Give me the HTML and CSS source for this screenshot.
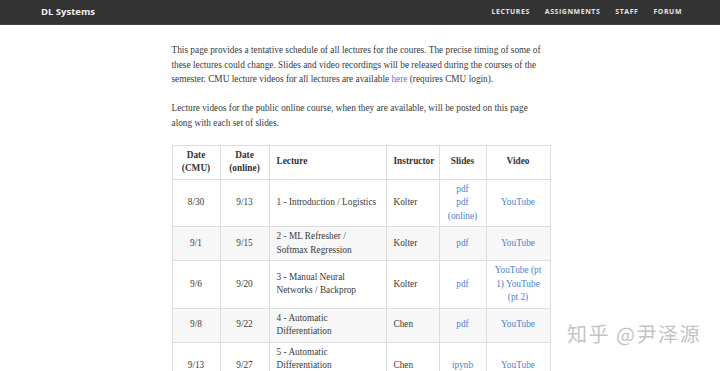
FILE: index.html
```html
<!DOCTYPE html>
<html lang="en">
<head>
  <meta charset="UTF-8" />
  <title>Lectures | DL Systems</title>
  <link rel="stylesheet" href="styles.css">
</head>
<body>

  <nav class="navbar">
    <a href="#" class="brand">DL Systems</a>
    <ul class="nav-links">
      <li><a href="#">Lectures</a></li>
      <li><a href="#">Assignments</a></li>
      <li><a href="#">Staff</a></li>
      <li><a href="#">Forum</a></li>
    </ul>
  </nav>

  <div class="container">
    <p>This page provides a tentative schedule of all lectures for the coures. The precise timing of some of these lectures could change. Slides and video recordings will be released during the courses of the semester. CMU lecture videos for all lectures are available <a href="#">here</a> (requires CMU login).</p>

    <p>Lecture videos for the public online course, when they are available, will be posted on this page along with each set of slides.</p>

    <table class="schedule">
      <thead>
        <tr>
          <th class="c-date">Date (CMU)</th>
          <th class="c-online">Date (online)</th>
          <th class="c-lecture left">Lecture</th>
          <th class="c-instr left">Instructor</th>
          <th class="c-slides">Slides</th>
          <th class="c-video">Video</th>
        </tr>
      </thead>
      <tbody>
        <tr>
          <td>8/30</td>
          <td>9/13</td>
          <td class="left">1 - Introduction / Logistics</td>
          <td class="left">Kolter</td>
          <td><a href="#">pdf</a><br><a href="#">pdf (online)</a></td>
          <td><a href="#">YouTube</a></td>
        </tr>
        <tr>
          <td>9/1</td>
          <td>9/15</td>
          <td class="left">2 - ML Refresher / Softmax Regression</td>
          <td class="left">Kolter</td>
          <td><a href="#">pdf</a></td>
          <td><a href="#">YouTube</a></td>
        </tr>
        <tr>
          <td>9/6</td>
          <td>9/20</td>
          <td class="left">3 - Manual Neural Networks / Backprop</td>
          <td class="left">Kolter</td>
          <td><a href="#">pdf</a></td>
          <td><a href="#">YouTube (pt 1)</a> <a href="#">YouTube (pt 2)</a></td>
        </tr>
        <tr>
          <td>9/8</td>
          <td>9/22</td>
          <td class="left">4 - Automatic Differentiation</td>
          <td class="left">Chen</td>
          <td><a href="#">pdf</a></td>
          <td><a href="#">YouTube</a></td>
        </tr>
        <tr>
          <td>9/13</td>
          <td>9/27</td>
          <td class="left">5 - Automatic Differentiation Implementation</td>
          <td class="left">Chen</td>
          <td><a href="#">ipynb</a></td>
          <td><a href="#">YouTube</a></td>
        </tr>
      </tbody>
    </table>
  </div>

  <div class="watermark">知乎 @尹泽源</div>

</body>
</html>
```

FILE: styles.css
```css
body {
  margin: 0;
  font-family: 'Liberation Serif', 'Times New Roman', serif;
  font-size: 9.3px;
  line-height: 14.5px;
  color: #3a3a3a;
  background: #fff;
}

a {
  color: #4a7fd4;
  text-decoration: none;
}

.navbar {
  display: flex;
  align-items: center;
  justify-content: space-between;
  height: 24px;
  padding: 0 38px 0 41px;
  background-color: #333;
  border-bottom: 1px solid #444;
  font-family: 'Open Sans', sans-serif;
}

.brand {
  color: #f2f2f2;
  font-weight: 700;
  font-size: 9.5px;
}

.nav-links {
  display: flex;
  gap: 15px;
  margin: 0;
  padding: 0;
  list-style: none;
}

.nav-links a {
  color: #e6e6e6;
  font-size: 6.9px;
  font-weight: 700;
  letter-spacing: 0.6px;
  text-transform: uppercase;
}

.container {
  width: 377px;
  margin: 0 auto;
  padding-top: 18px;
}

.container p {
  margin: 0 0 14.5px;
}

.schedule {
  width: 378px;
  margin-top: 14px;
  border-collapse: collapse;
  table-layout: fixed;
  line-height: 13.5px;
}

.schedule th,
.schedule td {
  box-sizing: border-box;
  border: 1px solid #ddd;
  padding: 3px 7px;
  text-align: center;
  vertical-align: middle;
}

.schedule th {
  font-weight: bold;
  color: #333;
}

.schedule .left {
  text-align: left;
}

.schedule tbody tr:nth-child(even) {
  background-color: #f7f7f7;
}

.c-date { width: 48px; }
.c-online { width: 49px; }
.c-lecture { width: 117px; }
.c-instr { width: 53px; }
.c-slides { width: 47px; }
.c-video { width: 64px; }

.watermark {
  position: absolute;
  left: 567px;
  top: 327px;
  font-family: 'Noto Sans CJK SC', sans-serif;
  font-size: 20px;
  color: #c4c4c4;
  text-shadow: 0 0 2px #fff;
  letter-spacing: 1.5px;
}
```
